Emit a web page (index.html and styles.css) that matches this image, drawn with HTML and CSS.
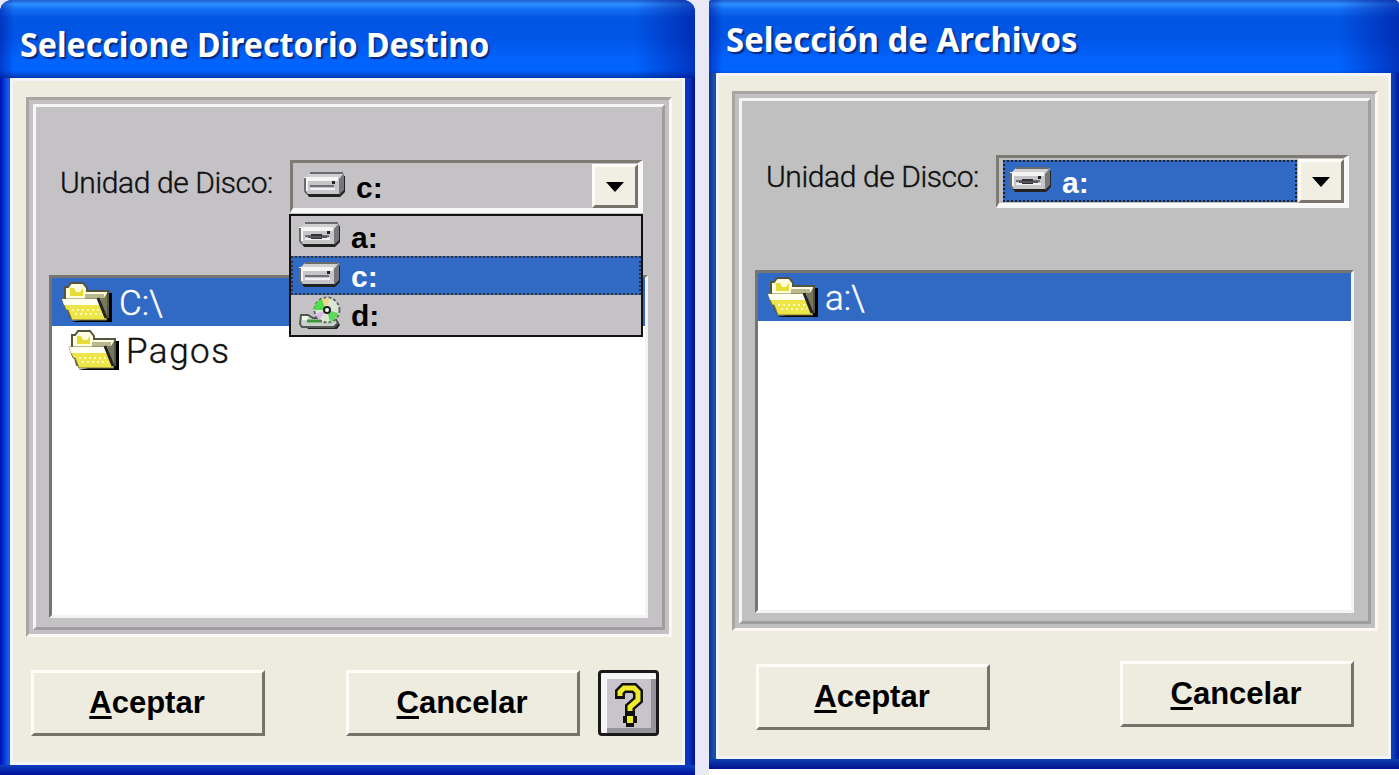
FILE: index.html
```html
<!DOCTYPE html>
<html lang="es">
  <head>
    <meta charset="UTF-8" />
    <meta name="viewport" content="width=device-width, initial-scale=1.0" />
    <title>Seleccione Directorio Destino</title>
    <link rel="stylesheet" href="styles.css">
  </head>
  <body>
    <svg class="defs" width="0" height="0">
      <defs>
        <symbol id="drive" viewBox="0 0 42 27">
          <path d="M5 26h31l5-5V5h-3v15l-4 3H3z" fill="#222" />
          <path d="M35 7l5-5v17l-5 5z" fill="#77777a" />
          <path d="M1 7l5-5h34l-5 6H1z" fill="#d0d0d2" />
          <path d="M1 8h34v15H3l-2-2z" fill="#c6c6c9" />
          <path d="M2 20V8h32" fill="none" stroke="#f5f5f5" stroke-width="4" />
          <path d="M6 2h33M1 7v13l2 3" fill="none" stroke="#6b6b6e" stroke-width="2" />
          <path d="M6 15h24" stroke="#707074" stroke-width="2" />
          <path d="M6 18h25" stroke="#f2f2f2" stroke-width="2" />
          <path d="M28 10h3v3h-3z" fill="#222" />
        </symbol>
        <symbol id="floppy" viewBox="0 0 42 27">
          <use href="#drive" width="42" height="27" />
          <path d="M12 13h11v5H12z" fill="#333" />
          <path d="M9 15h19v2H9z" fill="#55555a" />
        </symbol>
        <symbol id="cdrom" viewBox="0 0 42 34">
          <path d="M8 33h30l3-4-5-7H22z" fill="#222" />
          <path d="M2 19h7l5 3h22l3 5-4 4H3l-2-3z" fill="#c9d2c9" stroke="#555" stroke-width="2" />
          <path d="M3 20h6v4H3z" fill="#effbe8" />
          <path d="M8 25h15" stroke="#3c9a3c" stroke-width="3" />
          <circle cx="28" cy="14" r="12.5" fill="#dbe6d6" stroke="#5d6a5d" stroke-width="2" stroke-dasharray="3 2" />
          <path d="M27 14L15 14a12 12 0 0 1 8-11z" fill="#4fdc4f" />
          <path d="M27 14l-4-11 8-1z" fill="#f1d48a" />
          <path d="M28 14l11 3a12 12 0 0 1-8 9z" fill="#62d85a" />
          <path d="M28 14L16 18l4 6z" fill="#dcb9e8" />
          <circle cx="28" cy="14" r="3" fill="#fff" stroke="#222" stroke-width="2" />
        </symbol>
        <symbol id="folder" viewBox="0 0 52 42">
          <path d="M10 41h41V12h-5v22z" fill="#000" />
          <path d="M4 18V6h3l3-4h12l4 5v3h21v26H9z" fill="#fffde0" stroke="#55553f" stroke-width="2" />
          <path d="M9 7h4l2 4h4l3-4v8H9z" fill="#e6dc35" />
          <path d="M24 13h19v5H24z" fill="#b9b88e" />
          <path d="M39 17h4l3-5v25l-2 1z" fill="#77775a" />
          <path d="M1 18h36l9 21H11L7 29H5z" fill="#eee548" stroke="#77753c" stroke-width="1" />
          <path d="M1 18h36l3 6H3z" fill="#fffff2" />
          <path d="M37 17l8 20" stroke="#222" stroke-width="3" />
          <path d="M11 29h27M14 33h26" stroke="#fffcc0" stroke-width="2" stroke-dasharray="2 3" />
        </symbol>
      </defs>
    </svg>

    <div class="window window-destino">
      <div class="title-bar"><h1>Seleccione Directorio Destino</h1></div>
      <div class="client">
        <div class="panel">
          <div class="panel-inner">
            <div class="drive-row">
              <label>Unidad de Disco:</label>
              <div class="combo">
                <div class="combo-value">
                  <svg class="drive-icon"><use href="#drive" /></svg>
                  <span>c:</span>
                </div>
                <button class="arrow"><svg viewBox="0 0 18 10"><path d="M0 0h18L9 10z" /></svg></button>
                <ul class="options">
                  <li><svg class="drive-icon"><use href="#floppy" /></svg><span>a:</span></li>
                  <li class="selected"><svg class="drive-icon"><use href="#drive" /></svg><span>c:</span></li>
                  <li><svg class="drive-icon cd"><use href="#cdrom" /></svg><span>d:</span></li>
                </ul>
              </div>
            </div>
            <ul class="dir-list">
              <li class="selected"><svg class="folder-icon"><use href="#folder" /></svg><span>C:\</span></li>
              <li class="child"><svg class="folder-icon"><use href="#folder" /></svg><span>Pagos</span></li>
            </ul>
          </div>
        </div>
        <div class="buttons">
          <button class="btn"><u>A</u>ceptar</button>
          <button class="btn cancel"><u>C</u>ancelar</button>
          <button class="help">
            <svg viewBox="0 0 28 44">
              <path d="M5 16V9l4-4h10l4 4v8l-8 7v6" fill="none" stroke="#111" stroke-width="10" />
              <path d="M10 30h10v3h2v7h-3v4h-8v-4H8v-7h2z" fill="#111" />
              <path d="M5 13V9l4-4h10l4 4v8l-8 7v4" fill="none" stroke="#f0ea2c" stroke-width="5" />
              <path d="M12 33h6v7h-6z" fill="#f0ea2c" />
            </svg>
          </button>
        </div>
      </div>
    </div>

    <div class="window window-archivos">
      <div class="title-bar"><h1>Selección de Archivos</h1></div>
      <div class="client">
        <div class="panel">
          <div class="panel-inner">
            <div class="drive-row">
              <label>Unidad de Disco:</label>
              <div class="combo">
                <div class="combo-value focused">
                  <svg class="drive-icon"><use href="#floppy" /></svg>
                  <span>a:</span>
                </div>
                <button class="arrow"><svg viewBox="0 0 18 10"><path d="M0 0h18L9 10z" /></svg></button>
              </div>
            </div>
            <ul class="dir-list">
              <li class="selected"><svg class="folder-icon"><use href="#folder" /></svg><span>a:\</span></li>
            </ul>
          </div>
        </div>
        <div class="buttons">
          <button class="btn"><u>A</u>ceptar</button>
          <button class="btn cancel"><u>C</u>ancelar</button>
        </div>
      </div>
    </div>
  </body>
</html>
```

FILE: styles.css
```css
* {
  box-sizing: border-box;
}
body {
  margin: 0;
  display: flex;
  align-items: flex-start;
  gap: 14px;
  width: 1399px;
  height: 775px;
  overflow: hidden;
  background-color: #e9e9f6;
  font-family: "Liberation Sans", Arial, sans-serif;
  color: #000;
}
ul {
  list-style: none;
  margin: 0;
  padding: 0;
}
button {
  font-family: inherit;
  padding: 0;
}
.defs {
  position: absolute;
}

/* window frame */
.window {
  display: flex;
  flex-direction: column;
  flex: none;
  overflow: hidden;
}
.window-destino {
  width: 695px;
  height: 775px;
  padding: 0 10px 10px;
  border-radius: 12px 12px 0 0;
  background:
    linear-gradient(180deg, #1040c0, #001098) bottom / 100% 10px no-repeat,
    linear-gradient(90deg, #0010b8, #0a3fd8 5px, #1a62e8 9px, #0a3fd8 11px, #0a35c0 calc(100% - 6px), #00108a);
}
.window-archivos {
  width: 690px;
  height: 769px;
  padding: 0 8px 10px 7px;
  border-radius: 3px 5px 0 0;
  background:
    linear-gradient(180deg, #1040b0, #001090) bottom / 100% 10px no-repeat,
    linear-gradient(90deg, #0a3390, #1a52b0 5px, #1248b0 8px, #0a3fb8 calc(100% - 6px), #0018a0);
  box-shadow: 0 6px 0 #fff;
}
.title-bar {
  flex: none;
  height: 78px;
  margin: 0 -10px;
  padding-left: 20px;
  background:
    linear-gradient(90deg, rgba(0, 20, 150, 0.5), transparent 14px, transparent calc(100% - 60px), rgba(0, 20, 150, 0.6)),
    linear-gradient(180deg, #1c5cd0 0, #2e90ff 4px, #1470f4 9px, #0256e2 18px, #0055e6 38px, #0262fb 58px, #0064ff 70px, #0046c8 76px, #0030a8 78px);
}
.title-bar h1 {
  margin: 0;
  font: bold 34px/40px "Noto Sans", sans-serif;
  white-space: nowrap;
  color: #fff;
  text-shadow: 2px 2px 1px #0a2a80;
  transform-origin: 0 0;
  transform: scaleX(0.945);
  padding-top: 24px;
}
.window-archivos .title-bar {
  height: 73px;
  margin: 0 -8px 0 -7px;
  padding-left: 17px;
}
.window-archivos .title-bar h1 {
  padding-top: 19px;
  transform: scaleX(0.968);
}
.client {
  flex: 1;
  border: 3px solid #f1f5f6;
  padding: 16px 10px 0 13px;
  background-color: #eeebdf;
}
.window-archivos .client {
  padding-top: 15px;
}

/* double bevelled panel */
.panel {
  width: 646px;
  height: 540px;
  border: 3px solid;
  border-color: #aaa5a2 #faf8f0 #faf8f0 #aaa5a2;
  padding: 4px;
  background-color: #c3c1c3;
}
.panel-inner {
  height: 100%;
  border: 3px solid;
  border-color: #f6f6f6 #9f9d9f #9f9d9f #f6f6f6;
  padding: 53px 12px 9px 13px;
  background-color: #c4c2c5;
}
.window-archivos .panel,
.window-archivos .panel-inner {
  background-color: #c0c0c0;
}
.window-archivos .panel-inner {
  padding-top: 54px;
}
.drive-row {
  display: flex;
  height: 115px;
}
.drive-row label {
  flex: none;
  width: 241px;
  padding: 6px 0 0 11px;
  font: 300 30px/34px Roboto, sans-serif;
  letter-spacing: -0.4px;
  -webkit-text-stroke: 0.4px;
  white-space: nowrap;
  color: #111;
}
.window-archivos label {
  padding-top: 5px;
}
.combo {
  position: relative;
  display: flex;
  width: 353px;
  height: 53px;
  border: 3px solid;
  border-color: #7d7a74 #f8f8f8 #f8f8f8 #7d7a74;
  border-width: 3px 5px 5px 3px;
  padding-top: 1px;
}
.combo-value {
  flex: 1;
  display: flex;
  align-items: center;
  padding-left: 11px;
  gap: 10px;
  font-size: 30px;
  font-weight: bold;
}
.combo-value .drive-icon {
  margin-bottom: 4px;
}
.combo-value span {
  padding-top: 4px;
}
.combo-value.focused {
  margin: 1px 1px 1px 4px;
  padding-left: 7px;
  background-color: #316ac5;
  color: #fff;
  outline: 2px dotted #222;
  outline-offset: -2px;
}
.drive-icon {
  width: 42px;
  height: 27px;
}
.drive-icon.cd {
  height: 34px;
}
.arrow {
  width: 46px;
  border: 3px solid;
  border-color: #fdfcf6 #77736a #77736a #fdfcf6;
  background-color: #f1eee4;
}
.arrow svg {
  width: 18px;
  height: 10px;
  vertical-align: middle;
}
.options {
  position: absolute;
  top: 51px;
  left: -4px;
  z-index: 1;
  width: 354px;
  height: 123px;
  border: 2px solid #111;
  background-color: #c4c2c5;
}
.options li {
  display: flex;
  align-items: center;
  gap: 10px;
  height: 39px;
  padding-left: 8px;
  font-size: 30px;
  font-weight: bold;
}
.options li:first-child {
  height: 40px;
}
.options .drive-icon {
  margin-bottom: 3px;
}
.options li span {
  padding-top: 3px;
}
.options .selected {
  outline: 2px dotted #333;
  outline-offset: -2px;
}
.selected {
  background-color: #316ac5;
  color: #fff;
}
.dir-list {
  width: 599px;
  height: 343px;
  border: 3px solid;
  border-color: #77756f #f3f3f3 #f3f3f3 #77756f;
  background-color: #fff;
}
.dir-list li {
  display: flex;
  align-items: center;
  height: 48px;
  padding-left: 9px;
  gap: 6px;
  font: 300 35px/40px Roboto, sans-serif;
  -webkit-text-stroke: 0.4px;
}
.dir-list li span {
  padding-top: 4px;
}
.dir-list .child {
  padding-left: 16px;
  color: #111;
  letter-spacing: 1.5px;
}
.folder-icon {
  width: 52px;
  height: 42px;
}

/* buttons */
.buttons {
  display: flex;
  padding: 33px 0 0 5px;
}
.btn {
  width: 234px;
  height: 66px;
  border: 3px solid;
  border-color: #fdfcf6 #77736a #77736a #fdfcf6;
  background-color: #eeebdf;
  font-size: 31px;
  font-weight: bold;
  padding: 0 2px 0 0;
}
.btn u {
  text-decoration-thickness: 3px;
  text-underline-offset: 3px;
}
.window-destino .cancel {
  margin-left: 81px;
}
.help {
  width: 61px;
  height: 66px;
  margin-left: 18px;
  border: 3px solid #1a1a1a;
  border-radius: 4px;
  background-color: #c9c4cc;
  box-shadow: inset 6px 6px 0 #f5f5f5, inset -5px -5px 0 #96949a;
}
.help svg {
  width: 28px;
  height: 44px;
  vertical-align: middle;
  margin-top: 3px;
}
.window-archivos .buttons {
  padding: 33px 0 0 24px;
}
.window-archivos .cancel {
  margin: -3px 0 0 130px;
}
```
